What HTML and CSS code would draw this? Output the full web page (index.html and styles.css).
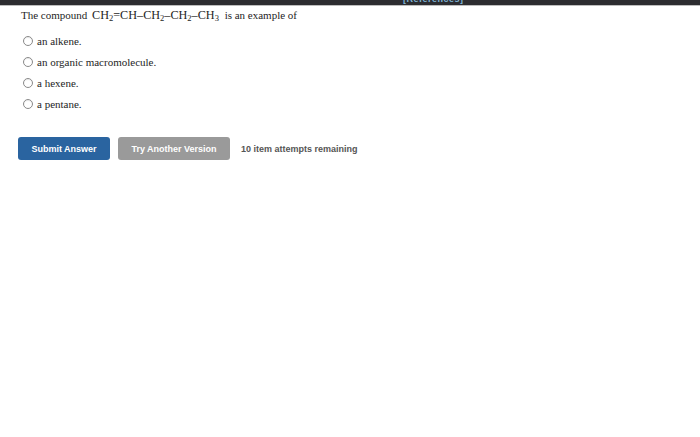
FILE: index.html
```html
<!DOCTYPE html>
<html>
<head>
<meta charset="utf-8">
<link rel="stylesheet" href="styles.css">
</head>
<body>
<div class="topbar"><span class="ref">[References]</span></div>
<div class="content">
  <p class="question">The compound <span class="formula">CH<sub>2</sub>=CH–CH<sub>2</sub>–CH<sub>2</sub>–CH<sub>3</sub></span> is an example of</p>
  <ul class="choices">
    <li><span class="radio"></span>an alkene.</li>
    <li><span class="radio"></span>an organic macromolecule.</li>
    <li><span class="radio"></span>a hexene.</li>
    <li><span class="radio"></span>a pentane.</li>
  </ul>
  <div class="actions">
    <button class="btn btn-primary">Submit Answer</button>
    <button class="btn btn-secondary">Try Another Version</button>
    <span class="attempts">10 item attempts remaining</span>
  </div>
</div>
</body>
</html>
```
FILE: styles.css
```css
html, body { margin: 0; padding: 0; background: #fff; }
body { font-family: "Liberation Serif", "Times New Roman", serif; color: #1e1e1e; }
.topbar {
  height: 5px;
  background: #2c2c30;
  border-bottom: 1px solid #bdbdbd;
  overflow: hidden;
  position: relative;
}
.ref {
  position: absolute;
  left: 403px;
  top: -6px;
  font: bold 9px "Liberation Sans", Arial, sans-serif;
  color: #7fb4d6;
  letter-spacing: 0.5px;
}
.content { padding: 0 0 0 21px; }
.question { margin: 3px 0 0; font-size: 11px; line-height: 13px; }
.formula { margin: 0 3px 0 2px; font-size: 12.2px; }
sub { font-size: 8.5px; vertical-align: -2px; line-height: 0; }
.choices { list-style: none; margin: 8px 0 0; padding: 0 0 0 2px; }
.choices li { display: flex; align-items: center; height: 21px; font-size: 11px; }
.radio {
  width: 10px; height: 10px; border: 1px solid #8a8a8a; border-radius: 50%;
  margin-right: 4px; box-sizing: border-box; background: #fff;
  box-shadow: inset 0 1px 1px rgba(0,0,0,0.08);
}
.actions { display: flex; align-items: center; margin: 23px 0 0 -3px; gap: 8px; }
.btn {
  height: 23px; border: none; border-radius: 3px; color: #fff;
  font: bold 9px "Liberation Sans", Arial, sans-serif; padding: 0;
}
.btn-primary { background: #2a64a0; width: 92px; }
.btn-secondary { background: #9a9a9a; width: 112px; }
.attempts { font: bold 9px "Liberation Sans", Arial, sans-serif; color: #555; margin-left: 3px; }
```
